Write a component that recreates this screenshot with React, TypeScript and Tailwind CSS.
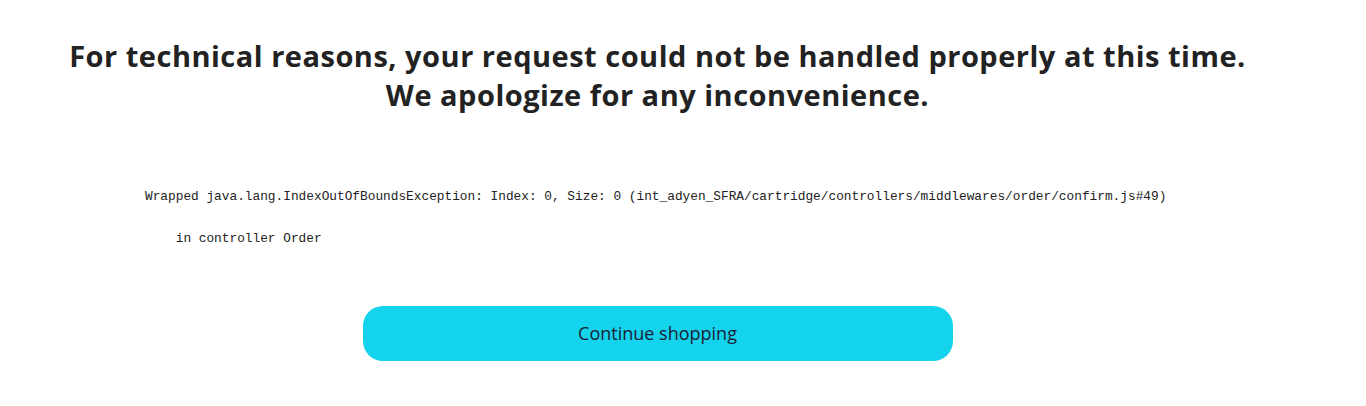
import React from "react";

export default function App() {
  const line1 =
    "Wrapped java.lang.IndexOutOfBoundsException: Index: 0, Size: 0 (int_adyen_SFRA/cartridge/controllers/middlewares/order/confirm.js#49)";
  return (
    <div className="w-[1315px] bg-white min-h-[406px]">
      <div className="pt-[36px] flex flex-col items-center">
        <h1 className="text-center text-[29px] leading-[39px] tracking-[0.5px] font-bold text-[#222222] font-['Open_Sans',sans-serif]">
          For technical reasons, your request could not be handled properly at this time.
          <br />
          We apologize for any inconvenience.
        </h1>
      </div>
      <pre className="mt-[72px] ml-[145px] font-['Liberation_Mono',monospace] text-[12.8px] leading-[21px] text-[#222222]">
        {line1}
        {"\n\n"}
        {"    in controller Order"}
      </pre>
      <div className="flex justify-center mt-[57px]">
        <button className="w-[590px] h-[55px] rounded-[20px] bg-[#14d3ec] text-[18px] text-[#1d1d35] font-['Open_Sans',sans-serif]">
          Continue shopping
        </button>
      </div>
    </div>
  );
}
